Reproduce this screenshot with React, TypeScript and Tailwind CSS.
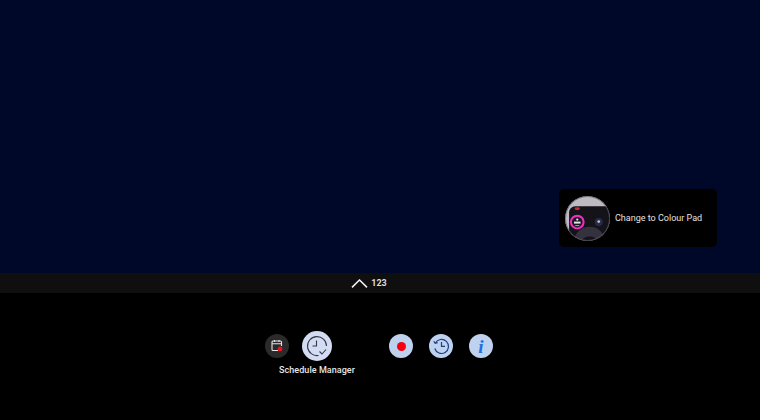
function Thumb() {
  return (
    <svg width="45" height="45" viewBox="0 0 44 44" className="block">
      <defs>
        <clipPath id="thumb-clip">
          <circle cx="22" cy="22" r="22" />
        </clipPath>
      </defs>
      <g clipPath="url(#thumb-clip)">
        <rect width="44" height="44" fill="#bdbac2" />
        <path d="M4 44V16a6 6 0 0 1 6-6h34v34z" fill="#141319" />
        <ellipse cx="12" cy="12.5" rx="2.6" ry="1.4" fill="#c62a3a" />
        <circle cx="12" cy="25.5" r="6.2" fill="#1a1720" stroke="#f02fc2" strokeWidth="2" />
        <circle cx="12" cy="23" r="1.1" fill="#dfe0ea" />
        <rect x="8.8" y="25" width="6.4" height="2" fill="#dfe0ea" />
        <rect x="10" y="28.5" width="4" height="0.9" fill="#d8b040" />
        <circle cx="33" cy="25.5" r="4" fill="#262a44" />
        <circle cx="33" cy="25" r="1.4" fill="#b9bdd6" />
        <path d="M9 44a15 14 0 0 1 30 0h-7a9 8 0 0 0-16 0z" fill="#34323f" />
      </g>
      <circle cx="22" cy="22" r="21.5" fill="none" stroke="#5d5a62" strokeWidth="0.7" />
    </svg>
  );
}

export default function App() {
  return (
    <div className="relative flex h-[420px] w-[760px] flex-col overflow-hidden bg-black font-[Roboto,sans-serif] text-white">
      <div className="h-[273px] bg-[#000829]" />

      <div className="flex h-5 items-center justify-center gap-[3px] bg-[#0f0f0f] pr-[22px]">
        <svg width="17" height="9" viewBox="0 0 17 9" fill="none" stroke="#f2f2f2" strokeWidth="1.5">
          <path d="M1 8.4 8.5 1l7.5 7.4" />
        </svg>
        <span className="text-[9px] leading-none font-bold text-[#dcdcdc]">123</span>
      </div>

      <div className="flex items-start pt-[41px] pl-[265px]">
        <div className="flex h-6 w-6 items-center justify-center rounded-full bg-[#2a2a2a]">
          <svg width="14" height="14" viewBox="0 0 14 14" fill="none" stroke="#e4e4e4" strokeWidth="1.1">
            <path d="M8 11.5H3a1 1 0 0 1-1-1V3a1 1 0 0 1 1-1h7.5a1 1 0 0 1 1 1v4" />
            <path d="M2 4.8h9.5M4.5 1v2M9 1v2" />
            <circle cx="10" cy="10" r="2.4" fill="#f01020" stroke="none" />
          </svg>
        </div>

        <div className="ml-[13px] flex w-[30px] flex-col items-center">
          <div className="-mt-[3px] flex h-[30px] w-[30px] shrink-0 items-center justify-center rounded-full bg-[#d3dcf2]">
            <svg width="22" height="22" viewBox="0 0 22 22" fill="none" stroke="#33394a" strokeWidth="1.1">
              <path d="M12.5 20.5A9.5 9.5 0 1 1 20.5 11" />
              <path d="M10.5 5.5V11H6.5" />
              <path d="M13.5 16.5l2.5 2.5 4-4.5" />
            </svg>
          </div>
          <span className="mt-[2px] text-[9px] leading-[14px] font-medium tracking-[0.05px] whitespace-nowrap text-[#e6e6e6]">
            Schedule Manager
          </span>
        </div>

        <div className="ml-[57px] flex h-6 w-6 items-center justify-center rounded-full bg-[#bed2f0]">
          <div className="h-[9px] w-[9px] rounded-full bg-[#f4000f]" />
        </div>

        <div className="ml-4 flex h-6 w-6 items-center justify-center rounded-full bg-[#bed2f0]">
          <svg width="18" height="18" viewBox="0 0 18 18" fill="none" stroke="#1d3f7c" strokeWidth="1.2">
            <path d="M3.4 6a7 7 0 1 1-.6 5.5" />
            <path d="M1.8 4.2 3.2 6.4l2.4-.7" />
            <path d="M9.5 5v4.3h3.5" />
          </svg>
        </div>

        <div className="ml-4 flex h-6 w-6 items-center justify-center rounded-full bg-[#bed2f0]">
          <span className="font-['Liberation_Serif',serif] text-[19px] leading-none font-bold text-[#1f6fe0] italic">i</span>
        </div>
      </div>

      <div className="absolute top-[189px] left-[559px] flex h-[58px] w-[158px] items-center gap-[5px] rounded-[5px] bg-black pl-[6px]">
        <Thumb />
        <span className="text-[9px] leading-none whitespace-nowrap text-[#e2e2e2]">Change to Colour Pad</span>
      </div>
    </div>
  );
}
